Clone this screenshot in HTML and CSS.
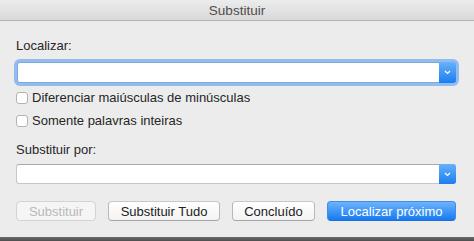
FILE: index.html
```html
<!DOCTYPE html>
<html lang="pt">
  <head>
    <meta charset="UTF-8" />
    <title>Substituir</title>
    <link rel="stylesheet" href="styles.css">
  </head>
  <body>
    <div class="window">
      <div class="titlebar">Substituir</div>

      <div class="content">
        <label class="field-label" for="findText">Localizar:</label>
        <div class="combo focused">
          <input type="text" id="findText" />
          <span class="combo-arrow">
            <svg width="7" height="5" viewBox="0 0 7 5"><path d="M1 1l2.5 2.5 2.5-2.5" fill="none" stroke="#fff" stroke-width="1.2"/></svg>
          </span>
        </div>

        <label class="check first">
          <span class="box"></span>
          Diferenciar maiúsculas de minúsculas
        </label>
        <label class="check">
          <span class="box"></span>
          Somente palavras inteiras
        </label>

        <label class="field-label second" for="replaceText">Substituir por:</label>
        <div class="combo replace">
          <input type="text" id="replaceText" />
          <span class="combo-arrow">
            <svg width="7" height="5" viewBox="0 0 7 5"><path d="M1 1l2.5 2.5 2.5-2.5" fill="none" stroke="#fff" stroke-width="1.2"/></svg>
          </span>
        </div>

        <div class="buttons">
          <button class="btn disabled btn-replace" disabled>Substituir</button>
          <button class="btn btn-all">Substituir Tudo</button>
          <button class="btn btn-done">Concluído</button>
          <button class="btn primary btn-next">Localizar próximo</button>
        </div>
      </div>

      <div class="desk"></div>
    </div>
  </body>
</html>
```

FILE: styles.css
```css
body {
  margin: 0;
  font-family: "Liberation Sans", Arial, sans-serif;
  font-size: 13px;
  color: #262626;
}

.window {
  width: 474px;
  height: 241px;
  background: #ececec;
  display: flex;
  flex-direction: column;
  overflow: hidden;
}

.titlebar {
  height: 20px;
  line-height: 21px;
  text-align: center;
  font-size: 13.5px;
  color: #4d4d4d;
  background: linear-gradient(#ececec, #d9d9d9);
  border-bottom: 1px solid #b3b3b3;
  flex-shrink: 0;
}

.content {
  flex: 1;
  padding: 0 17px 0 16px;
  display: flex;
  flex-direction: column;
}

.field-label {
  display: block;
  line-height: 16px;
  margin-top: 17px;
}

.field-label.second {
  margin-top: 13px;
}

.combo {
  display: flex;
  height: 21px;
  margin-top: 8px;
  margin-left: 1px;
  margin-right: 1px;
  background: white;
  border: 1px solid #b9b9b9;
  border-radius: 3px;
  box-sizing: border-box;
}

.combo.focused {
  border-color: #7fa9dc;
  box-shadow: 0 0 0 3px #93bcee;
}

.combo.replace {
  height: 20px;
  margin-top: 6px;
  margin-left: 0;
  border-color: #c6c6c6;
  border-top-color: #a9a9a9;
}

.combo input {
  flex: 1;
  border: none;
  outline: none;
  background: transparent;
  padding: 0 4px;
  font: inherit;
}

.combo-arrow {
  width: 17px;
  display: flex;
  align-items: center;
  justify-content: center;
  background: linear-gradient(#67b1fa, #1b7ef1);
  border-radius: 0 3px 3px 0;
  margin: -1px -1px -1px 0;
}

.check {
  display: flex;
  align-items: center;
  line-height: 16px;
  margin-top: 7px;
}

.box {
  width: 10px;
  height: 10px;
  background: white;
  border: 1px solid #b3b3b3;
  border-radius: 3px;
  margin-right: 4px;
}

.buttons {
  display: flex;
  gap: 12px;
  margin-top: 17px;
}

.btn {
  height: 20px;
  padding: 0;
  font: inherit;
  color: #222;
  background: linear-gradient(#ffffff, #f3f3f3);
  border: 1px solid #b8b8b8;
  border-top-color: #c8c8c8;
  border-bottom-color: #a6a6a6;
  border-radius: 4px;
}

.btn.disabled {
  color: #b9b9b9;
  background: #f5f5f5;
  border-color: #d3d3d3;
}

.btn.primary {
  color: white;
  background: linear-gradient(#6db3fb, #167af2);
  border-color: #3d8cf0;
  border-bottom-color: #1f6fd6;
}

.btn-replace { width: 80px; }
.btn-all { width: 112px; }
.btn-done { width: 83px; }
.btn-next { width: 129px; }

.desk {
  height: 4px;
  background: linear-gradient(#6a6a6a, #4e4e4e);
  flex-shrink: 0;
}
```
